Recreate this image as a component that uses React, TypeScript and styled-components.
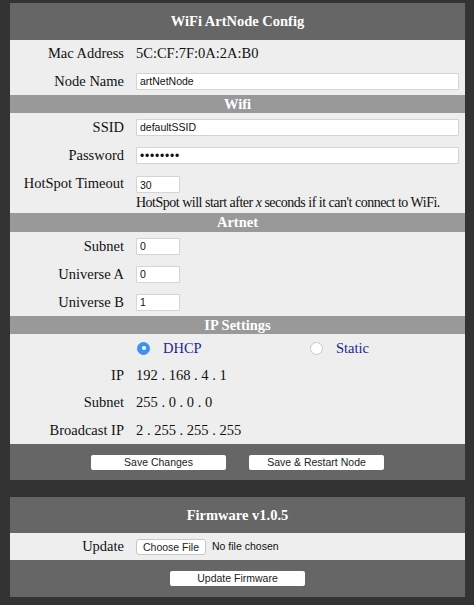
import React from "react";
import styled, { createGlobalStyle } from "styled-components";

const GlobalStyle = createGlobalStyle`
  html, body {
    margin: 0;
    padding: 0;
    background: #333333;
  }
  body {
    font-family: "Liberation Serif", "Times New Roman", serif;
    color: #111;
  }
`;

const Page = styled.div`
  width: 474px;
  height: 605px;
  box-sizing: border-box;
  padding: 3px 9px 0 10px;
  display: flex;
  flex-direction: column;
  gap: 17px;
`;

const Panel = styled.section`
  background: #eeeeee;
  display: flex;
  flex-direction: column;
`;

const Title = styled.h1<{ $h?: number }>`
  margin: 0;
  height: ${(p) => p.$h ?? 37}px;
  background: #666666;
  color: #fff;
  font-size: 14.5px;
  font-weight: bold;
  display: flex;
  align-items: center;
  justify-content: center;
`;

const SubHeader = styled.h2<{ $h?: number }>`
  margin: 0;
  height: ${(p) => p.$h ?? 18}px;
  background: #999999;
  color: #fff;
  font-size: 14.5px;
  font-weight: bold;
  display: flex;
  align-items: center;
  justify-content: center;
`;

const Row = styled.div<{ $h?: number; $top?: boolean }>`
  display: grid;
  grid-template-columns: 114px 1fr;
  column-gap: 12px;
  align-items: ${(p) => (p.$top ? "start" : "center")};
  height: ${(p) => p.$h ?? 28}px;
  padding-right: 6px;
  font-size: 14.5px;
  line-height: 17px;
`;

const Label = styled.div<{ $pt?: number }>`
  text-align: right;
  white-space: nowrap;
  padding-top: ${(p) => p.$pt ?? 0}px;
`;

const Value = styled.div`
  white-space: nowrap;
`;

const Stack = styled.div`
  display: flex;
  flex-direction: column;
  padding-top: 6px;
  gap: 1px;
`;

const TextInput = styled.input<{ $wide?: boolean }>`
  box-sizing: border-box;
  width: ${(p) => (p.$wide ? "323px" : "44px")};
  height: 17px;
  margin: 0;
  padding: 0 3px;
  border: 1px solid #d4d4d4;
  border-radius: 1px;
  background: #fff;
  font-family: "Liberation Sans", Arial, sans-serif;
  font-size: 10.5px;
  color: #111;
  outline: none;

  &[type="password"] {
    font-size: 12px;
    letter-spacing: 0.8px;
  }
`;

const Hint = styled.div`
  font-size: 14px;
  letter-spacing: -0.5px;
  white-space: nowrap;
`;

const RadioGroup = styled.div`
  display: grid;
  grid-template-columns: 173px 1fr;
  align-items: center;
`;

const RadioOption = styled.label`
  display: flex;
  align-items: center;
  gap: 13px;
  color: #1f1f8f;
  font-size: 14.5px;
`;

const RadioDot = styled.span<{ $checked?: boolean }>`
  box-sizing: border-box;
  width: 13px;
  height: 13px;
  border-radius: 50%;
  margin-left: 1px;
  background: ${(p) => (p.$checked ? "#3a94f5" : "#fff")};
  border: 1px solid ${(p) => (p.$checked ? "#3a8ef0" : "#c8c8c8")};
  display: flex;
  align-items: center;
  justify-content: center;

  &::after {
    content: "";
    width: 4px;
    height: 4px;
    border-radius: 50%;
    background: #fff;
    display: ${(p) => (p.$checked ? "block" : "none")};
  }
`;

const Footer = styled.div<{ $h?: number }>`
  height: ${(p) => p.$h ?? 36}px;
  background: #666666;
  display: flex;
  align-items: center;
  justify-content: center;
  gap: 23px;
`;

const Button = styled.button`
  box-sizing: border-box;
  width: 135px;
  height: 15px;
  margin: 0;
  padding: 0;
  border: none;
  border-radius: 2px;
  background: #fff;
  color: #222;
  font-family: "Liberation Sans", Arial, sans-serif;
  font-size: 10.5px;
  line-height: 15px;
`;

const FileRow = styled.div`
  display: flex;
  align-items: center;
  gap: 6px;
  font-family: "Liberation Sans", Arial, sans-serif;
  font-size: 10.5px;
`;

const FileButton = styled.button`
  box-sizing: border-box;
  height: 16px;
  padding: 0 6px;
  margin: 0;
  border: 1px solid #c6c6c6;
  border-radius: 3px;
  background: #fff;
  font-family: "Liberation Sans", Arial, sans-serif;
  font-size: 10.5px;
  color: #222;
`;

export default function App() {
  return (
    <>
      <GlobalStyle />
      <Page>
        <Panel>
          <Title>WiFi ArtNode Config</Title>
          <Row $h={27}>
            <Label>Mac Address</Label>
            <Value>5C:CF:7F:0A:2A:B0</Value>
          </Row>
          <Row $h={28}>
            <Label>Node Name</Label>
            <TextInput $wide defaultValue="artNetNode" />
          </Row>

          <SubHeader>Wifi</SubHeader>
          <Row $h={28}>
            <Label>SSID</Label>
            <TextInput $wide defaultValue="defaultSSID" />
          </Row>
          <Row $h={29}>
            <Label>Password</Label>
            <TextInput $wide type="password" defaultValue="password" />
          </Row>
          <Row $h={43} $top>
            <Label $pt={5}>HotSpot Timeout</Label>
            <Stack>
              <TextInput defaultValue="30" />
              <Hint>
                HotSpot will start after <i>x</i> seconds if it can't connect to WiFi.
              </Hint>
            </Stack>
          </Row>

          <SubHeader $h={19}>Artnet</SubHeader>
          <Row>
            <Label>Subnet</Label>
            <TextInput defaultValue="0" />
          </Row>
          <Row>
            <Label>Universe A</Label>
            <TextInput defaultValue="0" />
          </Row>
          <Row>
            <Label>Universe B</Label>
            <TextInput defaultValue="1" />
          </Row>

          <SubHeader>IP Settings</SubHeader>
          <Row $h={28}>
            <Label />
            <RadioGroup>
              <RadioOption>
                <RadioDot $checked />
                DHCP
              </RadioOption>
              <RadioOption>
                <RadioDot />
                Static
              </RadioOption>
            </RadioGroup>
          </Row>
          <Row $h={27}>
            <Label>IP</Label>
            <Value>192 . 168 . 4 . 1</Value>
          </Row>
          <Row $h={27}>
            <Label>Subnet</Label>
            <Value>255 . 0 . 0 . 0</Value>
          </Row>
          <Row $h={28}>
            <Label>Broadcast IP</Label>
            <Value>2 . 255 . 255 . 255</Value>
          </Row>

          <Footer>
            <Button>Save Changes</Button>
            <Button>Save &amp; Restart Node</Button>
          </Footer>
        </Panel>

        <Panel>
          <Title $h={36}>Firmware v1.0.5</Title>
          <Row $h={27}>
            <Label>Update</Label>
            <FileRow>
              <FileButton>Choose File</FileButton>
              No file chosen
            </FileRow>
          </Row>
          <Footer $h={37}>
            <Button>Update Firmware</Button>
          </Footer>
        </Panel>
      </Page>
    </>
  );
}
